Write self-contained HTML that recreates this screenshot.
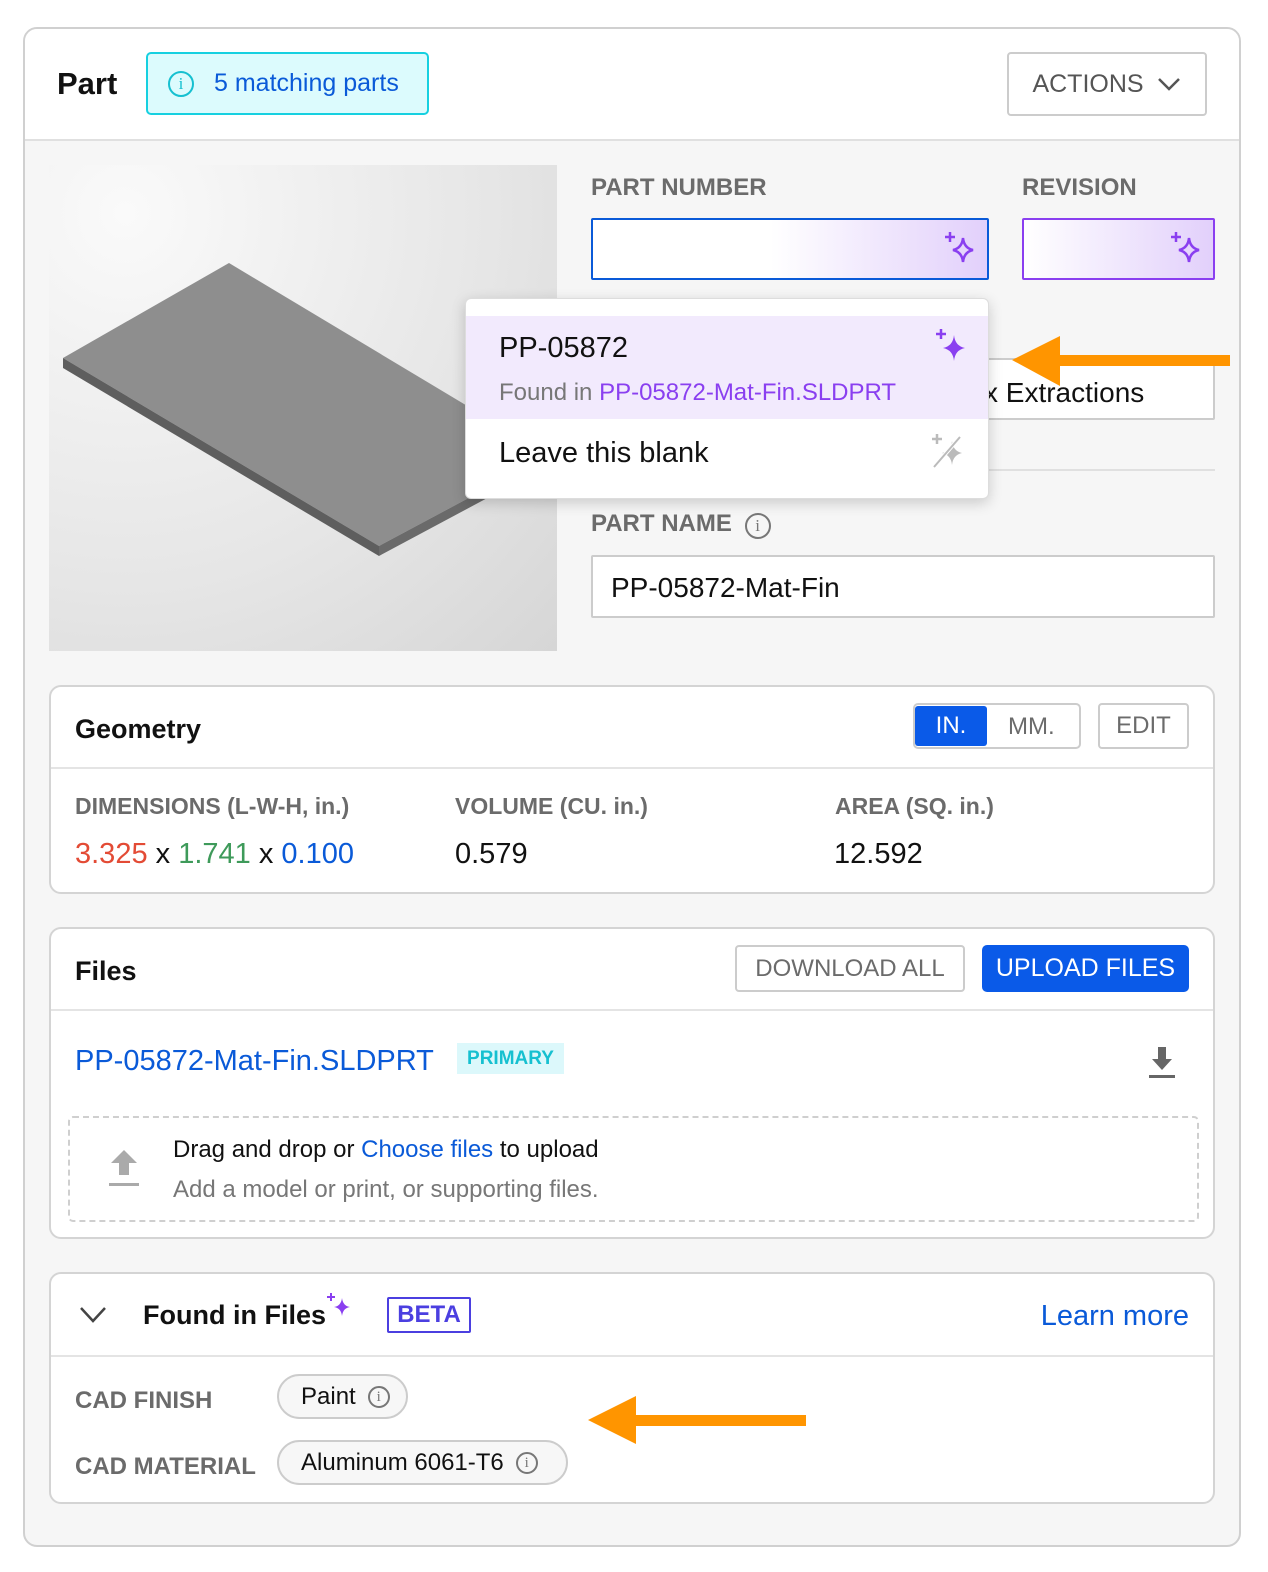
<!DOCTYPE html>
<html><head><meta charset="utf-8"><style>
*{box-sizing:border-box;margin:0;padding:0}
body{width:1268px;height:1572px;background:#fff;font-family:"Liberation Sans",sans-serif;position:relative;overflow:hidden;color:#111}
.a{position:absolute}
.card{position:absolute;background:#fff;border:2px solid #d4d4d4;border-radius:12px;overflow:hidden}
.lbl{position:absolute;color:#6b6b6b;font-size:24px;font-weight:bold}
.btn{position:absolute;border:2px solid #ccc;border-radius:4px;background:#fff;color:#6b6b6b;font-size:24px;display:flex;align-items:center;justify-content:center}
.hl{position:absolute;left:0;right:0;height:2px;background:#e4e4e4}
.pill{position:absolute;border:2px solid #ccc;border-radius:24px;background:#f7f7f7;font-size:24px;display:flex;align-items:center;padding-left:22px;color:#111}
.inf{display:inline-block;width:22px;height:22px;border:2px solid #777;border-radius:50%;font-size:15px;line-height:18px;text-align:center;color:#777;margin-left:12px;font-family:"Liberation Serif",serif}
</style></head><body>
<div class="a" style="left:23px;top:27px;width:1218px;height:1520px;border:2px solid #d0d0d0;border-radius:14px;background:#f6f6f6;overflow:hidden">
 <div class="a" style="left:0;top:0;right:0;height:112px;background:#fff;border-bottom:2px solid #e0e0e0"></div>
</div>
<div class="a" style="left:57px;top:66px;font-size:31px;font-weight:bold">Part</div>
<div class="a" style="left:146px;top:52px;width:283px;height:63px;background:#dcfbfd;border:2px solid #16d0e0;border-radius:5px;color:#0a5ad8;font-size:25px;display:flex;align-items:center;padding-left:20px"><span style="display:inline-block;width:26px;height:26px;border:2px solid #16c0d0;border-radius:50%;color:#16c0d0;font-size:17px;text-align:center;line-height:22px;margin-right:20px;font-family:'Liberation Serif',serif">i</span>5 matching parts</div>
<div class="btn" style="left:1007px;top:52px;width:200px;height:64px;font-size:25px;color:#555">ACTIONS <svg width="26" height="18" style="margin-left:12px"><path d="M3 4 L13 14 L23 4" stroke="#555" stroke-width="2.5" fill="none"/></svg></div>

<div class="a" style="left:49px;top:165px;width:508px;height:486px;background:radial-gradient(ellipse at 15% 10%,#fafafa,#e6e6e6 60%,#d6d6d6)"></div>
<svg class="a" style="left:49px;top:165px" width="508" height="486">
<polygon points="180,98 14,193 330,381 500,290" fill="#8e8e8e"/>
<polygon points="14,193 14,203 330,391 330,381" fill="#5e5e5e"/>
<polygon points="330,381 330,391 500,300 500,290" fill="#6a6a6a"/>
</svg>

<div class="lbl" style="left:591px;top:174px">PART NUMBER</div>
<div class="lbl" style="left:1022px;top:174px">REVISION</div>
<div class="a" style="left:591px;top:218px;width:398px;height:62px;border:2px solid #0a5ad8;border-radius:2px;background:linear-gradient(90deg,#fff 45%,#e2d0fb)"></div>
<div class="a" style="left:1022px;top:218px;width:193px;height:62px;border:2px solid #8a3ff0;border-radius:2px;background:linear-gradient(90deg,#fff,#e2d0fb)"></div>
<svg class="a" style="left:942px;top:230px" width="36" height="38"><path d="M21 8 Q22 18 31 20 Q22 22 21 32 Q20 22 11 20 Q20 18 21 8Z" fill="none" stroke="#8a3ff0" stroke-width="2.5"/><path d="M8 2 L8 12 M3 7 L13 7" stroke="#8a3ff0" stroke-width="2.5"/></svg>
<svg class="a" style="left:1168px;top:230px" width="36" height="38"><path d="M21 8 Q22 18 31 20 Q22 22 21 32 Q20 22 11 20 Q20 18 21 8Z" fill="none" stroke="#8a3ff0" stroke-width="2.5"/><path d="M8 2 L8 12 M3 7 L13 7" stroke="#8a3ff0" stroke-width="2.5"/></svg>

<div class="a" style="left:900px;top:358px;width:315px;height:62px;background:#fff;border:2px solid #ccc;border-radius:2px;font-size:28px;padding:17px 0 0 82px">x Extractions</div>
<div class="a" style="left:591px;top:469px;width:624px;height:2px;background:#e0e0e0"></div>
<div class="lbl" style="left:591px;top:510px">PART NAME <span class="inf" style="width:26px;height:26px;line-height:22px;font-size:17px;margin-left:6px;font-weight:normal">i</span></div>
<div class="a" style="left:591px;top:555px;width:624px;height:63px;background:#fff;border:2px solid #ccc;border-radius:2px;font-size:28px;padding:15px 0 0 18px">PP-05872-Mat-Fin</div>

<div class="a" style="left:465px;top:298px;width:524px;height:201px;background:#fff;border:1px solid #ddd;border-radius:6px;box-shadow:0 4px 14px rgba(0,0,0,.18)">
 <div class="a" style="left:0;right:0;top:17px;height:103px;background:#f2eafd"></div>
 <div class="a" style="left:33px;top:33px;font-size:29px">PP-05872</div>
 <div class="a" style="left:33px;top:80px;font-size:24px;color:#777">Found in <span style="color:#8a3ff0">PP-05872-Mat-Fin.SLDPRT</span></div>
 <svg class="a" style="left:466px;top:28px" width="40" height="40"><path d="M22 8 Q23 19 33 21 Q23 23 22 34 Q21 23 11 21 Q21 19 22 8Z" fill="#8a3ff0"/><path d="M9 2 L9 12 M4 7 L14 7" stroke="#8a3ff0" stroke-width="2.5"/></svg>
 <div class="a" style="left:33px;top:138px;font-size:29px">Leave this blank</div>
 <svg class="a" style="left:462px;top:132px" width="40" height="40"><path d="M24 10 Q25 20 34 22 Q25 24 24 34 Q23 24 14 22 Q23 20 24 10Z" fill="#bbb"/><path d="M9 3 L9 13 M4 8 L14 8" stroke="#bbb" stroke-width="2.5"/><path d="M6 36 L32 6" stroke="#fff" stroke-width="4"/><path d="M6 36 L32 6" stroke="#bbb" stroke-width="2"/></svg>
</div>

<div class="card" style="left:49px;top:685px;width:1166px;height:209px">
 <div class="a" style="left:24px;top:27px;font-size:27px;font-weight:bold">Geometry</div>
 <div class="hl" style="top:80px"></div>
 <div class="lbl" style="left:24px;top:106px;font-size:23px">DIMENSIONS (L-W-H, in.)</div>
 <div class="lbl" style="left:404px;top:106px;font-size:23px">VOLUME (CU. in.)</div>
 <div class="lbl" style="left:784px;top:106px;font-size:23px">AREA (SQ. in.)</div>
 <div class="a" style="left:24px;top:151px;font-size:29px"><span style="color:#e34b35">3.325</span> x <span style="color:#3e9a5a">1.741</span> x <span style="color:#0a5ad8">0.100</span></div>
 <div class="a" style="left:404px;top:151px;font-size:29px">0.579</div>
 <div class="a" style="left:783px;top:151px;font-size:29px">12.592</div>
</div>
<div class="a" style="left:913px;top:703px;width:168px;height:46px;border:2px solid #ccc;border-radius:5px;background:#fff"></div>
<div class="a" style="left:915px;top:706px;width:72px;height:40px;background:#0a5ae8;border-radius:3px;color:#fff;font-size:24px;display:flex;align-items:center;justify-content:center">IN.</div>
<div class="a" style="left:1008px;top:713px;font-size:24px;color:#6b6b6b">MM.</div>
<div class="btn" style="left:1098px;top:703px;width:91px;height:46px">EDIT</div>

<div class="card" style="left:49px;top:927px;width:1166px;height:312px">
 <div class="a" style="left:24px;top:27px;font-size:27px;font-weight:bold">Files</div>
 <div class="hl" style="top:80px"></div>
 <div class="a" style="left:24px;top:116px;font-size:29px;color:#0a5ad8">PP-05872-Mat-Fin.SLDPRT</div>
 <div class="a" style="left:406px;top:114px;width:107px;height:31px;background:#dcf8fb;color:#16c0d0;font-size:19px;font-weight:bold;display:flex;align-items:center;justify-content:center">PRIMARY</div>
 <svg class="a" style="left:1096px;top:116px" width="30" height="36"><path d="M11 2 H19 V14 H25 L15 25 L5 14 H11Z" fill="#666"/><rect x="2" y="30" width="26" height="3" fill="#666"/></svg>
 <div class="a" style="left:17px;top:187px;width:1131px;height:106px;border:2px dashed #cfcfcf;border-radius:5px"></div>
 <svg class="a" style="left:56px;top:220px" width="34" height="42"><path d="M12 26 H22 V14 H30 L17 1 L4 14 H12Z" fill="#aaa"/><rect x="2" y="34" width="30" height="3" fill="#aaa"/></svg>
 <div class="a" style="left:122px;top:207px;font-size:24px">Drag and drop or <span style="color:#0a5ad8">Choose files</span> to upload</div>
 <div class="a" style="left:122px;top:247px;font-size:24px;color:#777">Add a model or print, or supporting files.</div>
</div>
<div class="btn" style="left:735px;top:945px;width:230px;height:47px">DOWNLOAD ALL</div>
<div class="a" style="left:982px;top:945px;width:207px;height:47px;background:#0a5ae8;border-radius:5px;color:#fff;font-size:25px;display:flex;align-items:center;justify-content:center">UPLOAD FILES</div>

<div class="card" style="left:49px;top:1272px;width:1166px;height:232px">
 <svg class="a" style="left:28px;top:30px" width="30" height="22"><path d="M2 4 L14 17 L26 4" stroke="#444" stroke-width="2.5" fill="none"/></svg>
 <div class="a" style="left:92px;top:26px;font-size:27px;font-weight:bold">Found in Files</div>
 <svg class="a" style="left:274px;top:18px" width="30" height="30"><path d="M17 6 Q18 14 25 15 Q18 16 17 24 Q16 16 9 15 Q16 14 17 6Z" fill="#8a3ff0"/><path d="M6 1 L6 9 M2 5 L10 5" stroke="#8a3ff0" stroke-width="2"/></svg>
 <div class="a" style="left:336px;top:23px;width:84px;height:36px;border:2px solid #4b3fe0;border-radius:2px;color:#4b3fe0;font-size:24px;font-weight:bold;display:flex;align-items:center;justify-content:center">BETA</div>
 <div class="a" style="right:24px;top:26px;font-size:29px;color:#0a5ad8">Learn more</div>
 <div class="hl" style="top:81px"></div>
 <div class="lbl" style="left:24px;top:113px">CAD FINISH</div>
 <div class="lbl" style="left:24px;top:179px">CAD MATERIAL</div>
</div>
<div class="pill" style="left:277px;top:1374px;width:131px;height:45px">Paint<span class="inf">i</span></div>
<div class="pill" style="left:277px;top:1440px;width:291px;height:45px">Aluminum 6061-T6<span class="inf">i</span></div>

<svg class="a" style="left:1008px;top:332px" width="222" height="60"><rect x="44" y="23" width="178" height="11" fill="#ff9500"/><polygon points="4,28 52,4 52,54" fill="#ff9500"/></svg>
<svg class="a" style="left:584px;top:1393px" width="222" height="56"><rect x="44" y="22" width="178" height="11" fill="#ff9500"/><polygon points="4,27 52,3 52,51" fill="#ff9500"/></svg>
</body></html>
